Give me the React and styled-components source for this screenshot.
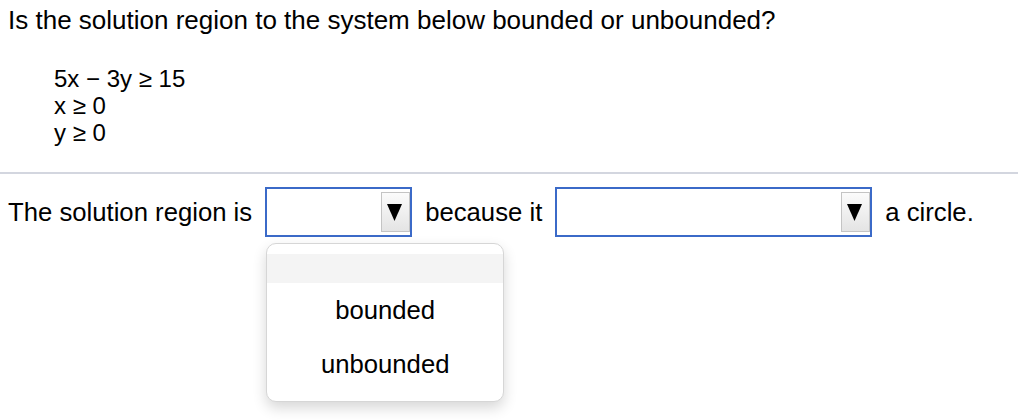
import React from 'react';
import styled, { createGlobalStyle } from 'styled-components';

const Global = createGlobalStyle`
  html, body { margin: 0; padding: 0; background: #fff; }
  body {
    font-family: "Liberation Sans", Arial, Helvetica, sans-serif;
    color: #000;
  }
`;

const Page = styled.div`
  width: 1018px;
  height: 420px;
  overflow: hidden;
  position: relative;
`;

const Question = styled.section`
  padding: 5px 8px 0;
`;

const Title = styled.p`
  margin: 0;
  font-size: 26px;
  line-height: 30px;
`;

const System = styled.div`
  margin: 30px 0 0 46px;
  display: flex;
  flex-direction: column;
`;

const Inequality = styled.div`
  font-size: 24px;
  line-height: 27px;
  white-space: pre;
`;

const Divider = styled.hr`
  margin: 26px 0 0;
  border: 0;
  height: 2px;
  background: #d3d6df;
`;

const AnswerRow = styled.div`
  display: flex;
  align-items: center;
  gap: 13px;
  padding: 13px 8px 0;
`;

const Label = styled.span`
  font-size: 25.7px;
  line-height: 30px;
  white-space: nowrap;
`;

const SelectWrap = styled.div`
  position: relative;
`;

const SelectBox = styled.div`
  box-sizing: border-box;
  width: ${(p) => p.$width}px;
  height: 50px;
  border: 2px solid #3b6ac8;
  background: #fff;
  display: flex;
  align-items: center;
  justify-content: flex-end;
`;

const ArrowButton = styled.div`
  box-sizing: border-box;
  width: 29px;
  height: 40px;
  border: 1px solid #c4c4c4;
  background: linear-gradient(#fbfbfb, #e4e4e4);
  display: flex;
  align-items: center;
  justify-content: center;
  padding-right: 2px;
`;

const Menu = styled.div`
  position: absolute;
  top: calc(100% + 6px);
  left: 1px;
  width: 238px;
  box-sizing: border-box;
  border: 1px solid #d6d6d6;
  border-radius: 10px;
  background: #fff;
  box-shadow: 0 6px 14px rgba(0, 0, 0, 0.16);
  padding: 10px 0;
  overflow: hidden;
  z-index: 2;
`;

const Option = styled.div`
  height: ${(p) => (p.$blank ? 29 : 54)}px;
  background: ${(p) => (p.$highlight ? '#f4f4f4' : 'transparent')};
  display: flex;
  align-items: center;
  justify-content: center;
  font-size: 25.7px;
  line-height: 30px;
`;

function Arrow() {
  return (
    <svg width="15" height="17" viewBox="0 0 15 17">
      <polygon points="0,0 15,0 7.5,17" fill="#000" />
    </svg>
  );
}

function Select({ width, children }) {
  return (
    <SelectWrap>
      <SelectBox $width={width}>
        <ArrowButton>
          <Arrow />
        </ArrowButton>
      </SelectBox>
      {children}
    </SelectWrap>
  );
}

export default function App() {
  return (
    <Page>
      <Global />
      <Question>
        <Title>Is the solution region to the system below bounded or unbounded?</Title>
        <System>
          <Inequality>5x − 3y ≥ 15</Inequality>
          <Inequality>x ≥ 0</Inequality>
          <Inequality>y ≥ 0</Inequality>
        </System>
      </Question>
      <Divider />
      <AnswerRow>
        <Label>The solution region is</Label>
        <Select width={147}>
          <Menu>
            <Option $blank $highlight />
            <Option>bounded</Option>
            <Option>unbounded</Option>
          </Menu>
        </Select>
        <Label>because it</Label>
        <Select width={317} />
        <Label>a circle.</Label>
      </AnswerRow>
    </Page>
  );
}
